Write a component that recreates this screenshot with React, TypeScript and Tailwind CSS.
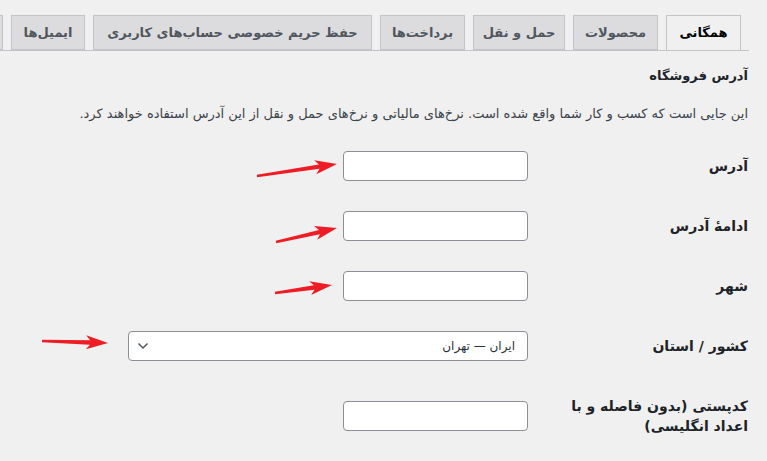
import React from "react";

const tabs = [
  { label: "همگانی", w: "w-[75px]", active: true },
  { label: "محصولات", w: "w-[85px]" },
  { label: "حمل و نقل", w: "w-[92px]" },
  { label: "برداخت‌ها", w: "w-[85px]" },
  { label: "حفظ حریم خصوصی حساب‌های کاربری", w: "w-[279px]" },
  { label: "ایمیل‌ها", w: "w-[74px]" },
  { label: "", w: "w-[40px]" },
];

type Pt = [number, number];

function arrowPoints(t: Pt, p: Pt) {
  const dx = p[0] - t[0];
  const dy = p[1] - t[1];
  const len = Math.hypot(dx, dy);
  const ux = dx / len;
  const uy = dy / len;
  const nx = -uy;
  const ny = ux;
  const hl = 22;
  const hw = 7;
  const bx = p[0] - ux * hl;
  const by = p[1] - uy * hl;
  const sw0 = 1.2;
  const sw1 = 2.2;
  const pts: Pt[] = [
    [t[0] + nx * sw0, t[1] + ny * sw0],
    [bx + ux * 4 + nx * sw1, by + uy * 4 + ny * sw1],
    [bx + nx * hw, by + ny * hw],
    [p[0], p[1]],
    [bx - nx * hw, by - ny * hw],
    [bx + ux * 4 - nx * sw1, by + uy * 4 - ny * sw1],
    [t[0] - nx * sw0, t[1] - ny * sw0],
  ];
  return pts.map((q) => q.join(",")).join(" ");
}

const arrows: [Pt, Pt][] = [
  [[257, 176], [337, 164]],
  [[276, 242], [337, 228]],
  [[275, 293], [332, 285]],
  [[42, 341], [108, 343]],
];

function TextInput() {
  return (
    <div className="h-[30px] w-[185px] rounded-[4px] border border-[#8c8f94] bg-white" />
  );
}

function Row({
  label,
  children,
  h,
}: {
  label: React.ReactNode;
  children: React.ReactNode;
  h: string;
}) {
  return (
    <div className={`flex ${h}`}>
      <div className="w-[210px] shrink-0 pl-[10px] pt-[20px] text-[14px] font-bold leading-[20px] text-[#1d2327]">
        {label}
      </div>
      <div className="flex items-center px-[10px]">{children}</div>
    </div>
  );
}

export default function App() {
  return (
    <div
      dir="rtl"
      className="relative h-[461px] w-[767px] overflow-hidden bg-[#f0f0f1] text-[#1d2327]"
      style={{ fontFamily: '"DejaVu Sans", Tahoma, sans-serif' }}
    >
      <div className="ml-0 mr-[18px] flex items-end overflow-hidden border-b border-[#c3c4c7] pt-[15px] pr-[8px]">
        {tabs.map((t, i) => (
          <div
            key={i}
            className={`${t.w} ml-[8px] flex h-[35px] shrink-0 items-center justify-center whitespace-nowrap border border-[#c3c4c7] text-[13px] font-bold ${
              t.active
                ? "-mb-px h-[36px] border-b-[#f0f0f1] bg-[#f0f0f1] pb-px text-black"
                : "bg-[#dcdcde] text-[#50575e]"
            }`}
          >
            {t.label}
          </div>
        ))}
      </div>

      <div className="pr-[19px]">
        <h2 className="mt-[15px] text-[13px] font-semibold leading-[20px] text-[#1d2327]">
          آدرس فروشگاه
        </h2>
        <p className="mt-[18px] whitespace-nowrap text-[13px] leading-[20px] text-[#3c434a]">
          این جایی است که کسب و کار شما واقع شده است. نرخ‌های مالیاتی و نرخ‌های حمل و نقل از این آدرس استفاده خواهند کرد.
        </p>

        <div className="mt-[12px]">
          <Row label="آدرس" h="h-[60px]">
            <TextInput />
          </Row>
          <Row label="ادامهٔ آدرس" h="h-[60px]">
            <TextInput />
          </Row>
          <Row label="شهر" h="h-[60px]">
            <TextInput />
          </Row>
          <Row label="کشور / استان" h="h-[60px]">
            <div className="flex h-[30px] w-[400px] items-center justify-between rounded-[4px] border border-[#8c8f94] bg-white pl-[8px] pr-[12px]">
              <span className="text-[12px] text-[#2c3338]">ایران — تهران</span>
              <svg width="12" height="8" viewBox="0 0 12 8">
                <path d="M1.5 1.5 L6 6 L10.5 1.5" fill="none" stroke="#50575e" strokeWidth="1.5" />
              </svg>
            </div>
          </Row>
          <Row
            label={
              <>
                کدپستی (بدون فاصله و با
                <br />
                اعداد انگلیسی)
              </>
            }
            h="h-[80px]"
          >
            <TextInput />
          </Row>
        </div>
      </div>

      <svg className="pointer-events-none absolute left-0 top-0" width="767" height="461">
        {arrows.map((a, i) => (
          <polygon key={i} points={arrowPoints(a[0], a[1])} fill="#ee1c24" />
        ))}
      </svg>
    </div>
  );
}
